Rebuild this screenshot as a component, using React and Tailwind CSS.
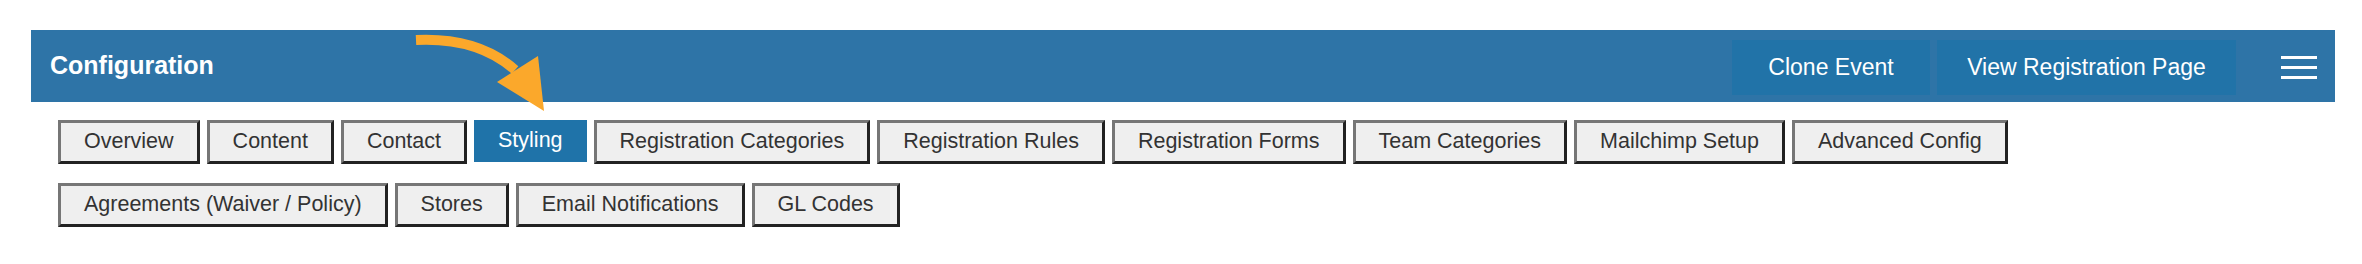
import React from "react";

const rowOne = [
  "Overview",
  "Content",
  "Contact",
  "Styling",
  "Registration Categories",
  "Registration Rules",
  "Registration Forms",
  "Team Categories",
  "Mailchimp Setup",
  "Advanced Config",
];

const rowTwo = ["Agreements (Waiver / Policy)", "Stores", "Email Notifications", "GL Codes"];

function TabButton({ label, active }) {
  if (active) {
    return (
      <button className="h-[42px] self-start bg-[#1f73a9] px-[24px] text-[21.5px] leading-none text-white">
        {label}
      </button>
    );
  }
  return (
    <button className="h-[44px] border-[3px] border-t-[#767676] border-l-[#767676] border-b-[#222222] border-r-[#222222] bg-[#efefef] px-[23px] text-[21.5px] leading-none text-[#333333]">
      {label}
    </button>
  );
}

function Arrow() {
  return (
    <svg
      className="pointer-events-none absolute left-[400px] top-[25px]"
      width="160"
      height="100"
      viewBox="400 25 160 100"
    >
      <path d="M416 40 Q478 37 515 70" fill="none" stroke="#fba82b" strokeWidth="10" />
      <polygon points="497,82 538,56 544,111" fill="#fba82b" />
    </svg>
  );
}

function App() {
  return (
    <div
      className="relative h-[264px] w-[2362px] bg-white pt-[30px]"
      style={{ fontFamily: '"Liberation Sans", Arial, sans-serif' }}
    >
      <div className="ml-[31px] flex h-[72px] w-[2304px] items-center justify-between bg-[#2e74a7] pl-[19px] pr-[18px]">
        <p className="text-[25px] font-bold text-white">Configuration</p>
        <div className="mt-[3px] flex items-center">
          <button className="h-[55px] w-[198px] bg-[#2173a8] text-[23px] text-white">Clone Event</button>
          <button className="ml-[7px] h-[55px] w-[299px] bg-[#2173a8] text-[23px] text-white">
            View Registration Page
          </button>
          <div className="ml-[45px] flex w-[36px] flex-col gap-[7px]">
            <span className="block h-[3px] bg-white" />
            <span className="block h-[3px] bg-white" />
            <span className="block h-[3px] bg-white" />
          </div>
        </div>
      </div>

      <div className="ml-[58px] mt-[18px] flex flex-col gap-[19px]">
        <div className="flex gap-[7px]">
          {rowOne.map((t) => (
            <TabButton key={t} label={t} active={t === "Styling"} />
          ))}
        </div>
        <div className="flex gap-[7px]">
          {rowTwo.map((t) => (
            <TabButton key={t} label={t} />
          ))}
        </div>
      </div>

      <Arrow />
    </div>
  );
}

export default App;
